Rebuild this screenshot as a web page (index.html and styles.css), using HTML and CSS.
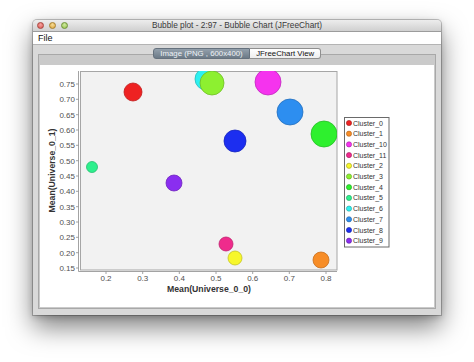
FILE: index.html
```html
<!DOCTYPE html>
<html>
<head>
<meta charset="utf-8">
<link rel="stylesheet" href="styles.css">
</head>
<body>
<div class="window">
  <div class="titlebar">
    <div class="lights"><span class="light red"></span><span class="light yellow"></span><span class="light green"></span></div>
    <div class="title">Bubble plot - 2:97 - Bubble Chart (JFreeChart)</div>
    <div></div>
  </div>
  <div class="menubar"><span class="menu">File</span></div>
  <div class="content">
    <div class="tabs"><span class="tab sel">Image (PNG , 600x400)</span><span class="tab">JFreeChart View</span></div>
    <div class="pane">
      <div class="chart">
        <svg width="394" height="242" viewBox="0 0 394 242">
          <defs>
            <clipPath id="plotclip"><rect x="40" y="6" width="257" height="199"/></clipPath>
          </defs>
          <rect class="plot" x="40.5" y="6.5" width="256.5" height="198.5"/>
          <g class="axis">
            <line x1="38.5" y1="6" x2="38.5" y2="206.5"/>
            <line x1="38.5" y1="206.5" x2="297" y2="206.5"/>
            <line x1="36" y1="19" x2="38.5" y2="19"/>
            <line x1="36" y1="34.3" x2="38.5" y2="34.3"/>
            <line x1="36" y1="49.7" x2="38.5" y2="49.7"/>
            <line x1="36" y1="65" x2="38.5" y2="65"/>
            <line x1="36" y1="80.3" x2="38.5" y2="80.3"/>
            <line x1="36" y1="95.7" x2="38.5" y2="95.7"/>
            <line x1="36" y1="111" x2="38.5" y2="111"/>
            <line x1="36" y1="126.3" x2="38.5" y2="126.3"/>
            <line x1="36" y1="141.7" x2="38.5" y2="141.7"/>
            <line x1="36" y1="157" x2="38.5" y2="157"/>
            <line x1="36" y1="172.3" x2="38.5" y2="172.3"/>
            <line x1="36" y1="187.7" x2="38.5" y2="187.7"/>
            <line x1="36" y1="203" x2="38.5" y2="203"/>
            <line x1="66" y1="206.5" x2="66" y2="209"/>
            <line x1="102.7" y1="206.5" x2="102.7" y2="209"/>
            <line x1="139.3" y1="206.5" x2="139.3" y2="209"/>
            <line x1="176" y1="206.5" x2="176" y2="209"/>
            <line x1="212.7" y1="206.5" x2="212.7" y2="209"/>
            <line x1="249.3" y1="206.5" x2="249.3" y2="209"/>
            <line x1="286" y1="206.5" x2="286" y2="209"/>
          </g>
          <g class="tick" text-anchor="end">
            <text x="35" y="22">0.75</text>
            <text x="35" y="37.3">0.70</text>
            <text x="35" y="52.7">0.65</text>
            <text x="35" y="68">0.60</text>
            <text x="35" y="83.3">0.55</text>
            <text x="35" y="98.7">0.50</text>
            <text x="35" y="114">0.45</text>
            <text x="35" y="129.3">0.40</text>
            <text x="35" y="144.7">0.35</text>
            <text x="35" y="160">0.30</text>
            <text x="35" y="175.3">0.25</text>
            <text x="35" y="190.7">0.20</text>
            <text x="35" y="206">0.15</text>
          </g>
          <g class="tick" text-anchor="middle">
            <text x="66" y="216">0.2</text>
            <text x="102.7" y="216">0.3</text>
            <text x="139.3" y="216">0.4</text>
            <text x="176" y="216">0.5</text>
            <text x="212.7" y="216">0.6</text>
            <text x="249.3" y="216">0.7</text>
            <text x="286" y="216">0.8</text>
          </g>
          <text class="axis-label" x="169" y="227" text-anchor="middle">Mean(Universe_0_0)</text>
          <text class="axis-label" x="15" y="105.5" text-anchor="middle" transform="rotate(-90 15 105.5)">Mean(Universe_0_1)</text>
          <g clip-path="url(#plotclip)" stroke-width="0.8">
            <circle cx="134" cy="118" r="8" fill="#8a2ef0" stroke="#6e24be"/>
            <circle cx="195" cy="76" r="11" fill="#1c2ef0" stroke="#1624be"/>
            <circle cx="250" cy="47" r="13" fill="#2d8ef0" stroke="#2470be"/>
            <circle cx="166" cy="14" r="11" fill="#2ef0f0" stroke="#24bebe"/>
            <circle cx="52" cy="102" r="5.5" fill="#2ef08d" stroke="#24be70"/>
            <circle cx="284" cy="69" r="13" fill="#2ef02e" stroke="#24be24"/>
            <circle cx="172" cy="18" r="12" fill="#8df030" stroke="#70be26"/>
            <circle cx="195" cy="193" r="7" fill="#f7f72b" stroke="#c4c422"/>
            <circle cx="186" cy="179" r="7" fill="#ef2b8c" stroke="#c0206f"/>
            <circle cx="228" cy="17" r="13" fill="#f533ee" stroke="#c02abc"/>
            <circle cx="281" cy="195" r="8" fill="#f78d27" stroke="#c86f1c"/>
            <circle cx="93" cy="27" r="9" fill="#ee2222" stroke="#c01a1a"/>
          </g>
          <rect class="legend" x="304.5" y="52.5" width="44.5" height="129.5"/>
          <g stroke-width="0.6">
            <circle cx="309" cy="58" r="2.6" fill="#ee2222" stroke="#a01818"/>
            <circle cx="309" cy="68.7" r="2.6" fill="#f78d27" stroke="#b06018"/>
            <circle cx="309" cy="79.4" r="2.6" fill="#f533ee" stroke="#a020a0"/>
            <circle cx="309" cy="90.1" r="2.6" fill="#ef2b8c" stroke="#a01860"/>
            <circle cx="309" cy="100.8" r="2.6" fill="#f7f72b" stroke="#a0a018"/>
            <circle cx="309" cy="111.5" r="2.6" fill="#8df030" stroke="#60a020"/>
            <circle cx="309" cy="122.2" r="2.6" fill="#2ef02e" stroke="#20a020"/>
            <circle cx="309" cy="132.9" r="2.6" fill="#2ef08d" stroke="#20a060"/>
            <circle cx="309" cy="143.6" r="2.6" fill="#2ef0f0" stroke="#20a0a0"/>
            <circle cx="309" cy="154.3" r="2.6" fill="#2d8ef0" stroke="#2060a0"/>
            <circle cx="309" cy="165" r="2.6" fill="#1c2ef0" stroke="#1020a0"/>
            <circle cx="309" cy="175.7" r="2.6" fill="#8a2ef0" stroke="#5c20a0"/>
          </g>
          <g class="legend-text">
            <text x="313" y="60.5">Cluster_0</text>
            <text x="313" y="71.2">Cluster_1</text>
            <text x="313" y="81.9">Cluster_10</text>
            <text x="313" y="92.6">Cluster_11</text>
            <text x="313" y="103.3">Cluster_2</text>
            <text x="313" y="114">Cluster_3</text>
            <text x="313" y="124.7">Cluster_4</text>
            <text x="313" y="135.4">Cluster_5</text>
            <text x="313" y="146.1">Cluster_6</text>
            <text x="313" y="156.8">Cluster_7</text>
            <text x="313" y="167.5">Cluster_8</text>
            <text x="313" y="178.2">Cluster_9</text>
          </g>
        </svg>
      </div>
    </div>
  </div>
</div>
</body>
</html>
```
FILE: styles.css
```css
* { box-sizing: border-box; }
html, body {
  margin: 0;
  padding: 0;
  background: #ffffff;
  width: 474px;
  height: 362px;
  overflow: hidden;
  font-family: "Liberation Sans", Arial, sans-serif;
}
.window {
  width: 408px;
  height: 295px;
  margin: 20px 0 0 33px;
  background: #d9d9d9;
  display: flex;
  flex-direction: column;
  border-radius: 4px 4px 0 0;
  box-shadow: 0 0 0 1px rgba(0,0,0,0.22), 0 12px 26px rgba(0,0,0,0.5), 0 2px 6px rgba(0,0,0,0.2);
}
.titlebar {
  height: 12px;
  display: grid;
  grid-template-columns: 1fr auto 1fr;
  align-items: center;
  background: linear-gradient(#ededed, #d0d0d0);
  border-bottom: 1px solid #9c9c9c;
  border-radius: 4px 4px 0 0;
}
.lights {
  display: flex;
  gap: 5px;
  padding-left: 3.5px;
  align-items: center;
}
.light {
  width: 7px;
  height: 7px;
  border-radius: 50%;
}
.red { background: radial-gradient(circle at 50% 35%, #f6a4a0, #d9534e); border: 0.5px solid #a8453f; }
.yellow { background: radial-gradient(circle at 50% 35%, #f6dc98, #dca53a); border: 0.5px solid #a7802e; }
.green { background: radial-gradient(circle at 50% 35%, #d0eaa0, #95c14a); border: 0.5px solid #6f9238; }
.title {
  font-size: 8.3px;
  color: #3a3a3a;
  white-space: nowrap;
  line-height: 11px;
}
.menubar {
  height: 13px;
  background: #ffffff;
  border-bottom: 1px solid #b4b4b4;
  display: flex;
  align-items: center;
  padding-left: 5px;
}
.menu {
  font-size: 9px;
  color: #111;
}
.content {
  flex: 1;
  display: flex;
  flex-direction: column;
  padding: 3px 5px 6px;
}
.tabs {
  display: flex;
  justify-content: center;
  height: 11px;
  margin-bottom: -5px;
  position: relative;
  z-index: 1;
}
.tab {
  font-size: 7.8px;
  display: flex;
  align-items: center;
  padding: 0 6px;
  white-space: nowrap;
  color: #111;
  background: linear-gradient(#ffffff, #eeeeee);
  border: 1px solid #8f8f8f;
  border-left: none;
  border-radius: 0 3px 3px 0;
}
.tab.sel {
  padding: 0 6.5px;
  color: #eef2f6;
  background: linear-gradient(#93a0ac, #6c7a87);
  border: 1px solid #65717d;
  border-radius: 3px 0 0 3px;
}
.pane {
  flex: 1;
  border: 1px solid #a8a8a8;
  background: #cacaca;
  padding: 10px 1px 1px;
}
.chart {
  background: #ffffff;
  height: 242px;
}
.chart svg { display: block; }
.plot { fill: #f2f2f2; stroke: #a6a6a6; stroke-width: 1; }
.axis line { stroke: #8c8c8c; stroke-width: 0.8; }
.tick { font-family: "Liberation Sans", Arial, sans-serif; font-size: 8px; fill: #505050; }
.axis-label { font-family: "Liberation Sans", Arial, sans-serif; font-size: 8.7px; font-weight: bold; fill: #333333; }
.legend { fill: #ffffff; stroke: #6a6a6a; stroke-width: 1; }
.legend-text { font-family: "Liberation Sans", Arial, sans-serif; font-size: 7px; fill: #333333; }
```
